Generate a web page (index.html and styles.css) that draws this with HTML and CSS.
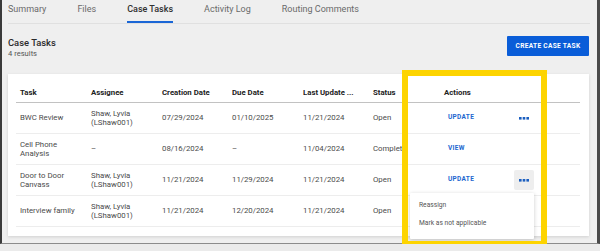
FILE: index.html
```html
<!DOCTYPE html>
<html>
<head>
<meta charset="utf-8">
<link rel="stylesheet" href="styles.css">
</head>
<body>
<div class="frame">
  <nav class="tabs">
    <span class="tab">Summary</span>
    <span class="tab">Files</span>
    <span class="tab active">Case Tasks</span>
    <span class="tab">Activity Log</span>
    <span class="tab">Routing Comments</span>
  </nav>
  <div class="head">
    <div class="head-text">
      <div class="title">Case Tasks</div>
      <div class="count">4 results</div>
    </div>
    <button class="create">CREATE CASE TASK</button>
  </div>
  <div class="card">
    <table class="tasks">
      <colgroup>
        <col class="c-task"><col class="c-assignee"><col class="c-created"><col class="c-due"><col class="c-updated"><col class="c-status"><col class="c-actions">
      </colgroup>
      <thead>
        <tr>
          <th>Task</th>
          <th>Assignee</th>
          <th>Creation Date</th>
          <th>Due Date</th>
          <th>Last Update ...</th>
          <th class="status">Status</th>
          <th class="act">Actions</th>
        </tr>
      </thead>
      <tbody>
        <tr>
          <td>BWC Review</td>
          <td>Shaw, Lyvia<br>(LShaw001)</td>
          <td>07/29/2024</td>
          <td>01/10/2025</td>
          <td>11/21/2024</td>
          <td class="status">Open</td>
          <td class="act">
            <div class="actions">
              <a class="link">UPDATE</a>
              <span class="more"><svg class="dots" width="10" height="3" viewBox="0 0 10 3"><rect x="0" y="0" width="2.6" height="2.6"/><rect x="3.7" y="0" width="2.6" height="2.6"/><rect x="7.4" y="0" width="2.6" height="2.6"/></svg></span>
            </div>
          </td>
        </tr>
        <tr>
          <td>Cell Phone<br>Analysis</td>
          <td>–</td>
          <td>08/16/2024</td>
          <td>–</td>
          <td>11/04/2024</td>
          <td class="status">Completed</td>
          <td class="act">
            <div class="actions">
              <a class="link">VIEW</a>
            </div>
          </td>
        </tr>
        <tr>
          <td>Door to Door<br>Canvass</td>
          <td>Shaw, Lyvia<br>(LShaw001)</td>
          <td>11/21/2024</td>
          <td>11/29/2024</td>
          <td>11/21/2024</td>
          <td class="status">Open</td>
          <td class="act">
            <div class="actions">
              <a class="link">UPDATE</a>
              <span class="more open"><svg class="dots" width="10" height="3" viewBox="0 0 10 3"><rect x="0" y="0" width="2.6" height="2.6"/><rect x="3.7" y="0" width="2.6" height="2.6"/><rect x="7.4" y="0" width="2.6" height="2.6"/></svg>
                <div class="menu">
                  <div class="menu-item">Reassign</div>
                  <div class="menu-item">Mark as not applicable</div>
                </div>
              </span>
            </div>
          </td>
        </tr>
        <tr>
          <td>Interview family</td>
          <td>Shaw, Lyvia<br>(LShaw001)</td>
          <td>11/21/2024</td>
          <td>12/20/2024</td>
          <td>11/21/2024</td>
          <td class="status">Open</td>
          <td class="act"></td>
        </tr>
      </tbody>
    </table>
  </div>
  <div class="highlight"></div>
</div>
</body>
</html>
```

FILE: styles.css
```css
html, body {
  margin: 0;
  padding: 0;
}
body {
  background: #ebebeb;
  font-family: Roboto, "Liberation Sans", Arial, sans-serif;
}
.frame {
  position: relative;
  width: 600px;
  height: 244px;
  box-sizing: border-box;
  border-left: 2px solid #3a3a3a;
  border-right: 3px solid #4a4a4a;
  border-bottom: 1px solid #8c8c8c;
  padding: 0 7px 0 6px;
  background: #efefef;
}
.tabs {
  display: flex;
  gap: 31px;
  border-bottom: 1px solid #e0e0e0;
}
.tab {
  font-size: 9px;
  line-height: 11px;
  padding: 4px 0 6px;
  border-bottom: 2px solid transparent;
  color: #6a6a6a;
}
.tab.active {
  color: #303030;
  font-weight: 500;
  border-bottom-color: #1a66d6;
}
.head {
  display: flex;
  justify-content: space-between;
  align-items: flex-start;
  padding-top: 12px;
  padding-right: 1px;
}
.title {
  font-size: 9.4px;
  line-height: 13px;
  font-weight: 500;
  color: #2a2a2a;
}
.count {
  font-size: 7.6px;
  line-height: 10px;
  color: #555;
}
.create {
  width: 82px;
  height: 20px;
  border: 0;
  border-radius: 1px;
  background: #0a5dd8;
  color: #fff;
  font-family: Roboto, "Liberation Sans", Arial, sans-serif;
  font-size: 6.6px;
  font-weight: 700;
  letter-spacing: 0.3px;
  padding: 0;
}
.card {
  margin-top: 15px;
  width: 581px;
  box-sizing: border-box;
  padding: 8px 9px 9px 8px;
  background: #fff;
  box-shadow: 0 1px 3px rgba(0,0,0,0.13);
}
.tasks {
  width: 564px;
  table-layout: fixed;
  border-collapse: separate;
  border-spacing: 0;
  font-size: 7.8px;
}
.c-task { width: 71px; }
.c-assignee { width: 71px; }
.c-created { width: 70px; }
.c-due { width: 71px; }
.c-updated { width: 70px; }
.c-status { width: 33px; }
.c-actions { width: 178px; }
.tasks th {
  height: 20px;
  padding: 0 0 0 4px;
  text-align: left;
  font-weight: 700;
  color: #222;
  border-bottom: 1px solid #c2c2c2;
  white-space: nowrap;
  overflow: hidden;
}
.tasks td {
  height: 30px;
  padding: 0 0 0 4px;
  color: #4a4a4a;
  line-height: 9.5px;
  border-bottom: 1px solid #ededed;
  vertical-align: middle;
}
.tasks .status {
  white-space: nowrap;
  overflow: hidden;
}
.tasks .act {
  padding-left: 42px;
}
.actions {
  display: flex;
  align-items: center;
}
.link {
  width: 66px;
  padding-left: 4px;
  font-size: 6.5px;
  font-weight: 700;
  letter-spacing: 0.3px;
  color: #1c66cf;
}
.more {
  position: relative;
  display: flex;
  align-items: center;
  justify-content: center;
  width: 20px;
  height: 20px;
  border-radius: 2px;
}
.more.open {
  background: #eeeeee;
}
.dots {
  display: block;
  fill: #1b5fc0;
}
.menu {
  position: absolute;
  right: 0;
  top: 23px;
  width: 124px;
  box-sizing: border-box;
  padding: 3px 0 7px 9px;
  background: #fff;
  box-shadow: 0 1px 4px rgba(0,0,0,0.2);
  border-radius: 1px;
  z-index: 2;
}
.menu-item {
  font-size: 6.7px;
  line-height: 18px;
  color: #555;
  white-space: nowrap;
}
.highlight {
  position: absolute;
  left: 400px;
  top: 70px;
  width: 145px;
  height: 177px;
  box-sizing: border-box;
  border: 6px solid #fdd400;
  z-index: 3;
  pointer-events: none;
}
```
